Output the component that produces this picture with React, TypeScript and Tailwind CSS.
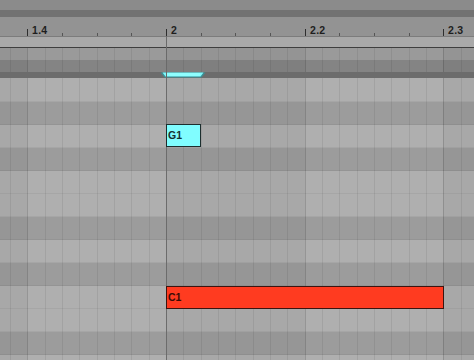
import React from "react";

const BAR_X = 166;
const STEP = 138.667 / 8;

type VLine = { x: number; kind: "sub" | "beat" | "bar" };

const vlines: VLine[] = [];
for (let k = -9; k <= 18; k++) {
  const x = Math.round(BAR_X + k * STEP);
  if (x < 0 || x > 474) continue;
  vlines.push({ x, kind: k === 0 ? "bar" : k % 8 === 0 ? "beat" : "sub" });
}

const rulerTicks: { x: number; label?: string }[] = [];
for (let k = -5; k <= 9; k++) {
  const x = Math.round(BAR_X + k * STEP * 2);
  if (x < 0 || x > 474) continue;
  let label: string | undefined;
  if (k === -4) label = "1.4";
  if (k === 0) label = "2";
  if (k === 4) label = "2.2";
  if (k === 8) label = "2.3";
  rulerTicks.push({ x, label });
}

// beat shading regions (darker beats)
const darkBeats: { left: number; width: number }[] = [
  { left: 0, width: 27 },
  { left: 166, width: 139 },
  { left: 443, width: 40 },
];

const rows: { name: string; black: boolean }[] = [
  { name: "A1", black: false },
  { name: "G#1", black: true },
  { name: "G1", black: false },
  { name: "F#1", black: true },
  { name: "F1", black: false },
  { name: "E1", black: false },
  { name: "D#1", black: true },
  { name: "D1", black: false },
  { name: "C#1", black: true },
  { name: "C1", black: false },
  { name: "B0", black: false },
  { name: "A#0", black: true },
  { name: "A0", black: false },
];

function GridLines({ strong }: { strong?: boolean }) {
  return (
    <>
      {vlines.map((l) => (
        <div
          key={l.x}
          className={
            "absolute top-0 bottom-0 w-px " +
            (l.kind === "bar"
              ? "bg-[#6c6c6c]"
              : l.kind === "beat"
              ? strong
                ? "bg-black/20"
                : "bg-black/15"
              : strong
              ? "bg-black/10"
              : "bg-black/[0.07]")
          }
          style={{ left: l.x }}
        />
      ))}
    </>
  );
}

function Shading() {
  return (
    <>
      {darkBeats.map((b) => (
        <div
          key={b.left}
          className="absolute top-0 bottom-0 bg-black/[0.035]"
          style={{ left: b.left, width: b.width }}
        />
      ))}
    </>
  );
}

export default function App() {
  return (
    <div
      className="relative w-[474px] h-[360px] overflow-hidden bg-[#adadad] flex flex-col"
      style={{ fontFamily: '"Liberation Sans", Arial, sans-serif' }}
    >
      <div className="h-[10px] shrink-0 bg-[#8b8b8b]" />
      <div className="h-[7px] shrink-0 bg-[#727272]" />
      {/* ruler */}
      <div className="relative h-[19px] shrink-0 bg-[#939393]">
        {rulerTicks.map((t) => (
          <React.Fragment key={t.x}>
            <div
              className={
                "absolute w-px " +
                (t.label ? "top-[12px] h-[7px] bg-[#2e2e2e]" : "top-[16px] h-[3px] bg-[#555555]")
              }
              style={{ left: t.x }}
            />
            {t.label && (
              <div
                className="absolute top-[7px] text-[10.5px] leading-[12px] font-bold text-[#1e1e1e] tracking-[0.3px]"
                style={{ left: t.x + 5 }}
              >
                {t.label}
              </div>
            )}
          </React.Fragment>
        ))}
      </div>
      <div className="h-px shrink-0 bg-[#7c7c7c]" />
      <div className="relative h-[10px] shrink-0 bg-[#a9a9a9]" />
      <div className="h-px shrink-0 bg-[#3e3e3e]" />
      <div className="relative h-[12px] shrink-0 bg-[#9a9a9a]">
        <Shading />
        <GridLines />
      </div>
      <div className="relative h-[12px] shrink-0 bg-[#848484]">
        <Shading />
        <GridLines />
      </div>
      <div className="relative h-[6px] shrink-0 bg-[#6c6c6c]">
        <svg className="absolute left-0 top-0" width="474" height="6" viewBox="0 0 474 6">
          <polygon points="160.5,0.5 205.5,0.5 201.5,5.5 164.5,5.5" fill="#3e8f94" />
          <polygon points="162.5,0.5 203.5,0.5 200.5,4.5 165.5,4.5" fill="#7ff8fb" />
          <rect x="166" y="1" width="34" height="3" fill="#8ffefe" />
        </svg>
      </div>
      {/* note grid */}
      <div className="relative flex-1">
        <div className="flex flex-col">
          {rows.map((r, i) => (
            <div
              key={r.name}
              className={
                (i === 0 ? "h-[24px] " : "h-[23px] ") +
                "shrink-0 border-b border-black/[0.05] " +
                (r.black ? "bg-[#9c9c9c]" : "bg-[#afafaf]")
              }
            />
          ))}
        </div>
        <Shading />
        <GridLines />
        {/* notes */}
        <div className="absolute left-[166px] top-[46px] w-[35px] h-[23px] bg-[#80fdff] border border-[#1c2e2e] flex items-center pl-[1px]">
          <span className="text-[10.5px] leading-none text-[#163030] font-bold">G1</span>
        </div>
        <div className="absolute left-[166px] top-[208px] w-[278px] h-[23px] bg-[#ff3b20] border border-[#3c1410] flex items-center pl-[1px]">
          <span className="text-[10.5px] leading-none text-[#3a0c06] font-bold">C1</span>
        </div>
      </div>
      {/* bar line from ruler through upper bands */}
      <div className="absolute left-[166px] top-[36px] h-[42px] w-px bg-[#6a6a6a]" />
    </div>
  );
}
